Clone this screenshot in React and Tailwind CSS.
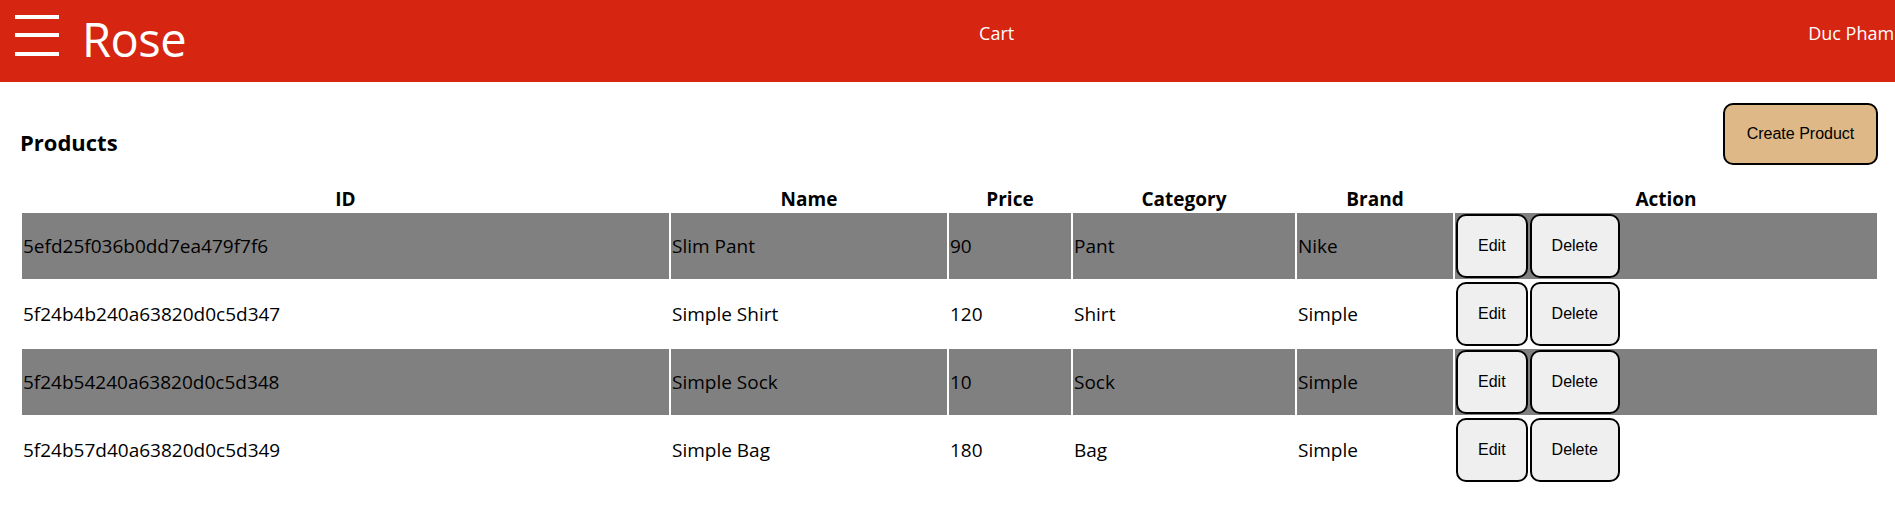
import React from "react";

const rows = [
  { id: "5efd25f036b0dd7ea479f7f6", name: "Slim Pant", price: "90", category: "Pant", brand: "Nike" },
  { id: "5f24b4b240a63820d0c5d347", name: "Simple Shirt", price: "120", category: "Shirt", brand: "Simple" },
  { id: "5f24b54240a63820d0c5d348", name: "Simple Sock", price: "10", category: "Sock", brand: "Simple" },
  { id: "5f24b57d40a63820d0c5d349", name: "Simple Bag", price: "180", category: "Bag", brand: "Simple" },
];

export default function App() {
  return (
    <div className="w-[1895px] h-[521px] bg-white text-black overflow-hidden font-['Open_Sans','Noto_Sans',sans-serif]">
      <header className="h-[82px] bg-[#d62511] text-white flex items-start overflow-hidden whitespace-nowrap">
        <svg className="ml-[15px] mt-[15px] shrink-0" width="44" height="41" viewBox="0 0 44 41">
          <rect x="0" y="0" width="44" height="4" fill="white" />
          <rect x="0" y="18" width="44" height="4" fill="white" />
          <rect x="0" y="37" width="44" height="4" fill="white" />
        </svg>
        <div className="ml-[23px] mt-[16px] text-[47px] leading-none shrink-0 tracking-[-0.5px]">Rose</div>
        <div className="ml-[793px] mt-[24px] text-[18px] leading-none shrink-0">Cart</div>
        <div className="ml-[794px] mt-[24px] text-[18px] leading-none shrink-0">Duc Pham</div>
      </header>

      <main className="pl-[20px] pr-[16px] pt-[21px]">
        <div className="flex justify-between items-start">
          <h3 className="mt-[25px] text-[22px] leading-[28px] font-bold">Products</h3>
          <button className="w-[155px] h-[62px] mr-[1px] bg-[#deb887] border-2 border-black rounded-[10px] text-[16px] text-black font-['Liberation_Sans',Arial,sans-serif]">
            Create Product
          </button>
        </div>

        <table className="mt-[20px] w-[1859px] table-fixed border-separate border-spacing-[2px] text-[19px]">
          <colgroup>
            <col className="w-[647px]" />
            <col className="w-[276px]" />
            <col className="w-[122px]" />
            <col className="w-[222px]" />
            <col className="w-[156px]" />
            <col className="w-[422px]" />
          </colgroup>
          <thead>
            <tr>
              {["ID", "Name", "Price", "Category", "Brand", "Action"].map((h) => (
                <th key={h} className="p-[1px] leading-[22px] font-bold text-center">
                  {h}
                </th>
              ))}
            </tr>
          </thead>
          <tbody>
            {rows.map((r, i) => {
              const bg = i % 2 === 0 ? "bg-[#808080]" : "bg-white";
              return (
                <tr key={r.id}>
                  <td className={`${bg} p-[1px] align-middle`}>{r.id}</td>
                  <td className={`${bg} p-[1px] align-middle`}>{r.name}</td>
                  <td className={`${bg} p-[1px] align-middle`}>{r.price}</td>
                  <td className={`${bg} p-[1px] align-middle`}>{r.category}</td>
                  <td className={`${bg} p-[1px] align-middle`}>{r.brand}</td>
                  <td className={`${bg} p-[1px] align-middle`}>
                    <div className="flex gap-[2px] font-['Liberation_Sans',Arial,sans-serif] text-[16px]">
                      <button className="h-[64px] px-[20px] bg-[#efefef] border-2 border-black rounded-[10px] text-black">
                        Edit
                      </button>
                      <button className="h-[64px] px-[20px] bg-[#efefef] border-2 border-black rounded-[10px] text-black">
                        Delete
                      </button>
                    </div>
                  </td>
                </tr>
              );
            })}
          </tbody>
        </table>
      </main>
    </div>
  );
}
